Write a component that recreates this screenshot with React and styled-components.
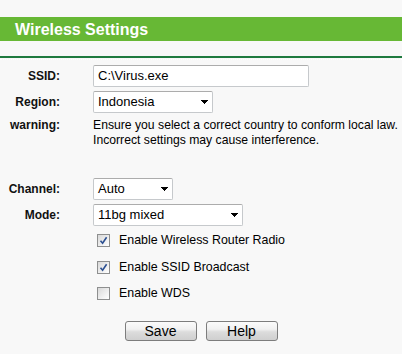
import React from "react";
import styled, { createGlobalStyle } from "styled-components";

const Global = createGlobalStyle`
  html, body { margin: 0; padding: 0; background: #f8f8f8; }
  body { font-family: "Liberation Sans", Arial, sans-serif; font-size: 12px; color: #000; }
`;

const Page = styled.div`
  width: 402px;
  height: 354px;
  padding-top: 17px;
  box-sizing: border-box;
  overflow: hidden;
`;

const Header = styled.div`
  height: 24px;
  line-height: 25px;
  background: #67b835;
  color: #fff;
  font-weight: bold;
  font-size: 16px;
  padding-left: 15px;
`;

const Rule = styled.div`
  margin-top: 15px;
  border-top: 2px solid #1f7a3f;
  padding-top: 1px;
  border-bottom: 1px dotted #ffffff;
`;

const Form = styled.div`
  display: flex;
  flex-direction: column;
  padding-top: 5px;
`;

const Row = styled.div`
  display: grid;
  grid-template-columns: 60px 1fr;
  column-gap: 33px;
  align-items: ${(p) => (p.$top ? "start" : "center")};
  margin-top: ${(p) => p.$mt || 0}px;
`;

const Label = styled.div`
  text-align: right;
  font-weight: bold;
  font-size: 12px;
  color: #111;
  line-height: 15px;
  white-space: nowrap;
`;

const Field = styled.div`
  display: flex;
  align-items: center;
`;

const TextBox = styled.div`
  width: ${(p) => p.$w}px;
  height: 22px;
  box-sizing: border-box;
  border: 1px solid #c6c9cc;
  border-top-color: #acacac;
  border-radius: 2px;
  background: #fff;
  padding-left: 4px;
  font-size: 13px;
  line-height: 20px;
  color: #000;
`;

const SelectBox = styled(TextBox)`
  display: flex;
  align-items: center;
  justify-content: space-between;
  padding-right: 4px;
`;

const Arrow = () => (
  <svg width="7" height="4" viewBox="0 0 7 4" shapeRendering="crispEdges">
    <rect x="0" y="0" width="7" height="1" fill="#000" />
    <rect x="1" y="1" width="5" height="1" fill="#000" />
    <rect x="2" y="2" width="3" height="1" fill="#000" />
    <rect x="3" y="3" width="1" height="1" fill="#000" />
  </svg>
);

const Select = ({ w, value }) => (
  <SelectBox $w={w}>
    <span>{value}</span>
    <Arrow />
  </SelectBox>
);

const Note = styled.div`
  font-size: 12.2px;
  line-height: 15px;
  white-space: nowrap;
`;

const CheckRow = styled.div`
  display: flex;
  align-items: center;
  height: 26px;
  margin-top: ${(p) => p.$mt || 0}px;
  padding-left: 97px;
  gap: 9px;
  font-size: 12.4px;
`;

const Box = styled.span`
  width: 13px;
  height: 13px;
  box-sizing: border-box;
  border: 1px solid #8e8f8f;
  background: linear-gradient(135deg, #d8d8d8 0%, #f0f0f0 60%, #ffffff 100%);
  display: flex;
  align-items: center;
  justify-content: center;
`;

const Check = ({ on, children, mt }) => (
  <CheckRow $mt={mt}>
    <Box>
      {on && (
        <svg width="9" height="9" viewBox="0 0 9 9">
          <path d="M1.5 4.8 L3.6 7.2 L7.6 1.2" stroke="#2b4f91" strokeWidth="1.6" fill="none" />
        </svg>
      )}
    </Box>
    <span>{children}</span>
  </CheckRow>
);

const Buttons = styled.div`
  display: flex;
  justify-content: center;
  gap: 9px;
  margin-top: 15px;
`;

const Button = styled.div`
  width: 72px;
  height: 20px;
  box-sizing: border-box;
  border: 1px solid #7d7d7d;
  border-radius: 3px;
  background: linear-gradient(#fbfbfb 0%, #f1f1f1 40%, #dcdcdc 55%, #cfcfcf 100%);
  font-size: 14px;
  line-height: 18px;
  text-align: center;
  color: #000;
`;

export default function App() {
  return (
    <Page>
      <Global />
      <Header>Wireless Settings</Header>
      <Rule />
      <Form>
        <Row>
          <Label>SSID:</Label>
          <Field>
            <TextBox $w={216}>C:\Virus.exe</TextBox>
          </Field>
        </Row>
        <Row $mt={4}>
          <Label>Region:</Label>
          <Field>
            <Select w={120} value="Indonesia" />
          </Field>
        </Row>
        <Row $mt={5} $top>
          <Label>warning:</Label>
          <Note>
            Ensure you select a correct country to conform local law.
            <br />
            Incorrect settings may cause interference.
          </Note>
        </Row>
        <Row $mt={30}>
          <Label>Channel:</Label>
          <Field>
            <Select w={80} value="Auto" />
          </Field>
        </Row>
        <Row $mt={4}>
          <Label>Mode:</Label>
          <Field>
            <Select w={150} value="11bg mixed" />
          </Field>
        </Row>
        <Check on mt={1}>Enable Wireless Router Radio</Check>
        <Check on mt={1}>Enable SSID Broadcast</Check>
        <Check mt={0}>Enable WDS</Check>
        <Buttons>
          <Button>Save</Button>
          <Button>Help</Button>
        </Buttons>
      </Form>
    </Page>
  );
}
